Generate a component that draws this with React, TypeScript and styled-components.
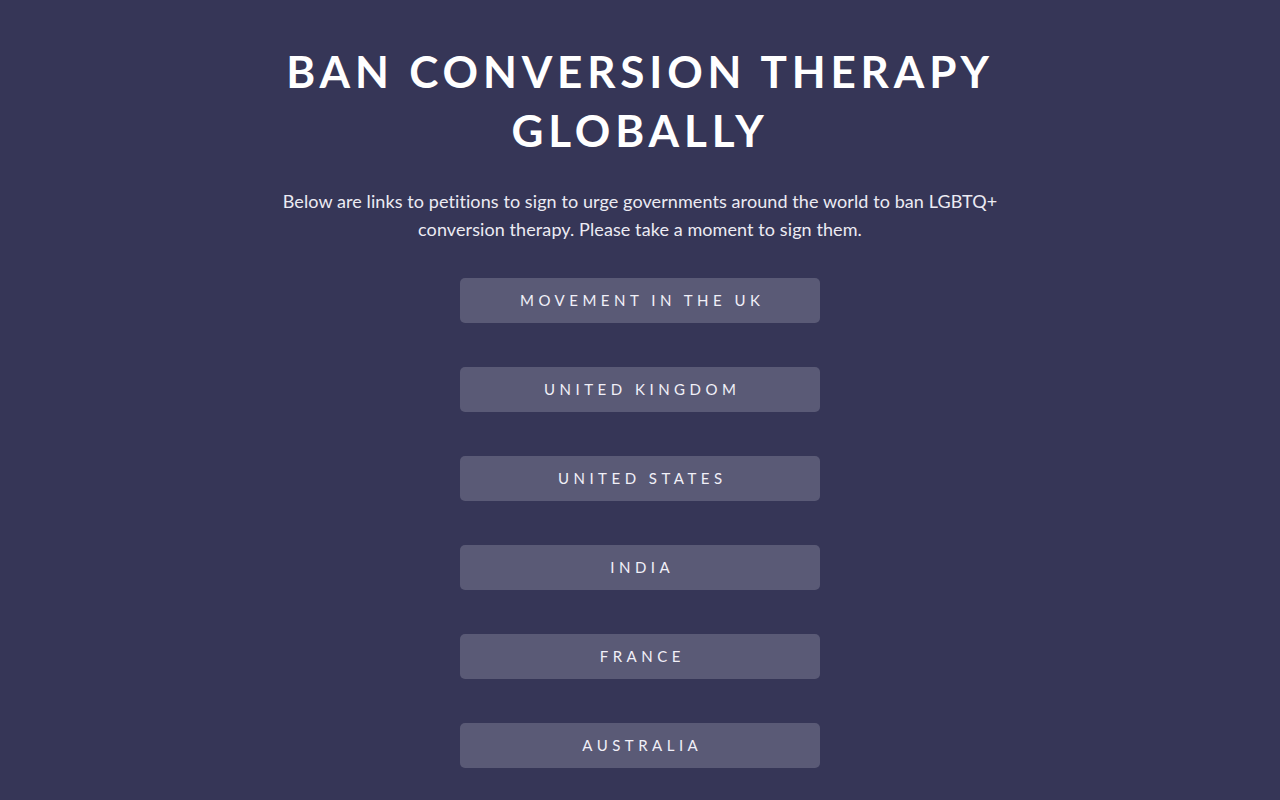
import styled, { createGlobalStyle } from 'styled-components'

const GlobalStyle = createGlobalStyle`
  html, body {
    margin: 0;
    padding: 0;
    background-color: #363657;
  }
  body {
    font-family: 'Lato', 'Open Sans', sans-serif;
    color: #fff;
  }
`

const links = [
  'Movement in the UK',
  'United Kingdom',
  'United States',
  'India',
  'France',
  'Australia',
]

export default function App(): JSX.Element {
  return (
    <>
      <GlobalStyle />
      <Page>
        <Title>Ban Conversion Therapy Globally</Title>
        <Intro>
          Below are links to petitions to sign to urge governments around the world to ban LGBTQ+
          conversion therapy. Please take a moment to sign them.
        </Intro>
        <LinkList>
          {links.map((l) => (
            <PetitionLink key={l} href="#">
              {l}
            </PetitionLink>
          ))}
        </LinkList>
      </Page>
    </>
  )
}

const Page = styled.main`
  width: 760px;
  margin: 0 auto;
  padding-top: 42px;
  display: flex;
  flex-direction: column;
  align-items: center;
  text-align: center;
`

const Title = styled.h1`
  margin: 0;
  font-size: 44px;
  font-weight: 700;
  line-height: 59px;
  letter-spacing: 0.11em;
  text-transform: uppercase;
  width: 760px;
`

const Intro = styled.p`
  margin: 27px 0 0;
  font-size: 18px;
  line-height: 28px;
  font-weight: 400;
  letter-spacing: 0.005em;
  color: #ecebf3;
`

const LinkList = styled.nav`
  margin-top: 35px;
  display: flex;
  flex-direction: column;
  gap: 44px;
  align-items: center;
`

const PetitionLink = styled.a`
  display: flex;
  align-items: center;
  justify-content: center;
  width: 360px;
  height: 45px;
  border-radius: 5px;
  background-color: #5a5a76;
  color: #f1f0f8;
  text-decoration: none;
  text-transform: uppercase;
  font-size: 15px;
  font-weight: 400;
  letter-spacing: 0.3em;
  padding: 0 0 1px 0.3em;
  box-sizing: border-box;
`
